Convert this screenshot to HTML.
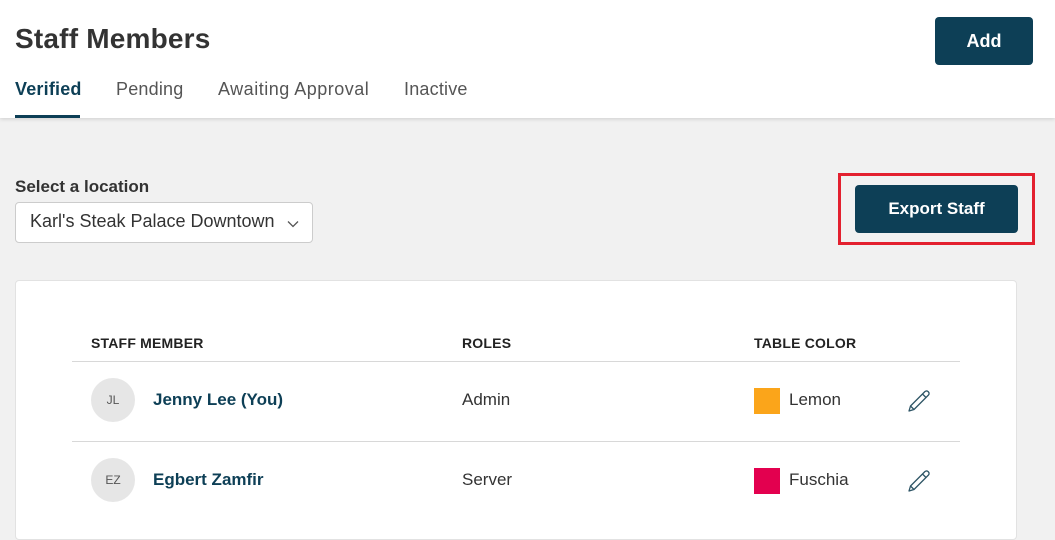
<!DOCTYPE html>
<html><head><style>
*{margin:0;padding:0;box-sizing:border-box}
body{width:1055px;height:511px;overflow:hidden;background:#f1f1f1;font-family:"Liberation Sans",sans-serif;color:#333;position:relative}
.hdr{position:absolute;left:0;top:0;width:1055px;height:118px;background:#fff;box-shadow:0 1px 4px rgba(0,0,0,.15)}
.abs{position:absolute;white-space:nowrap}
h1{position:absolute;left:15px;top:23px;font-size:28px;font-weight:bold;color:#333;letter-spacing:0.2px}
.btn{position:absolute;background:#0d3f56;color:#fff;font-weight:bold;border-radius:4px;display:flex;align-items:center;justify-content:center}
.tab{position:absolute;top:79px;font-size:18px;color:#555;letter-spacing:0.2px}
.card{position:absolute;left:15px;top:280px;width:1002px;height:260px;background:#fff;border:1px solid #e2e2e2;border-radius:4px}
.th{position:absolute;top:335px;font-size:14px;font-weight:bold;color:#222;letter-spacing:0.2px}
.line{position:absolute;left:72px;width:888px;height:1px;background:#d8d8d8}
.av{position:absolute;left:91px;width:44px;height:44px;border-radius:50%;background:#e6e6e6;font-size:12px;color:#555;display:flex;align-items:center;justify-content:center}
.nm{position:absolute;left:153px;font-size:17px;font-weight:bold;color:#0d3f56}
.tx{position:absolute;font-size:17px;color:#333}
.sw{position:absolute;left:754px;width:26px;height:26px}
</style></head><body>
<div class="hdr"></div>
<h1>Staff Members</h1>
<div class="btn" style="left:935px;top:17px;width:98px;height:48px;font-size:18px">Add</div>
<div class="tab" style="left:15px;color:#0d3f56;font-weight:bold">Verified</div>
<div class="abs" style="left:15px;top:115px;width:65px;height:3px;background:#0d3f56"></div>
<div class="tab" style="left:116px">Pending</div>
<div class="tab" style="left:218px;letter-spacing:0.5px">Awaiting Approval</div>
<div class="tab" style="left:404px">Inactive</div>
<div class="abs" style="left:15px;top:177px;font-size:17px;font-weight:bold;color:#333">Select a location</div>
<div class="abs" style="left:15px;top:202px;width:298px;height:41px;background:#fff;border:1px solid #ccc;border-radius:4px;font-size:18px;padding:8px 0 0 14px;color:#333">Karl's Steak Palace Downtown
<svg style="position:absolute;left:271px;top:17px" width="12" height="8" viewBox="0 0 12 8"><path d="M1 1.5l5 5 5-5" fill="none" stroke="#555" stroke-width="1.3"/></svg></div>
<div class="abs" style="left:838px;top:173px;width:197px;height:72px;border:3px solid #e3202f"></div>
<div class="btn" style="left:855px;top:185px;width:163px;height:48px;font-size:17px">Export Staff</div>
<div class="card"></div>
<div class="th" style="left:91px">STAFF MEMBER</div>
<div class="th" style="left:462px">ROLES</div>
<div class="th" style="left:754px">TABLE COLOR</div>
<div class="line" style="top:361px"></div>
<div class="line" style="top:441px"></div>
<div class="av" style="top:378px">JL</div>
<div class="nm" style="top:390px">Jenny Lee (You)</div>
<div class="tx" style="left:462px;top:390px">Admin</div>
<div class="sw" style="top:388px;background:#fba51a"></div>
<div class="tx" style="left:789px;top:390px">Lemon</div>
<div class="av" style="top:458px">EZ</div>
<div class="nm" style="top:470px">Egbert Zamfir</div>
<div class="tx" style="left:462px;top:470px">Server</div>
<div class="sw" style="top:468px;background:#e3004f"></div>
<div class="tx" style="left:789px;top:470px">Fuschia</div>
<svg class="abs" style="left:906px;top:388px" width="28" height="26" viewBox="0 0 28 26"><path d="M3 23l1.5-5L19 3.5a2.5 2.5 0 0 1 3.5 3.5L8 21.5z M16.5 6l3.5 3.5 M4.5 18l3.5 3.5" fill="none" stroke="#2e5566" stroke-width="1.3" stroke-linejoin="round"/></svg>
<svg class="abs" style="left:906px;top:468px" width="28" height="26" viewBox="0 0 28 26"><path d="M3 23l1.5-5L19 3.5a2.5 2.5 0 0 1 3.5 3.5L8 21.5z M16.5 6l3.5 3.5 M4.5 18l3.5 3.5" fill="none" stroke="#2e5566" stroke-width="1.3" stroke-linejoin="round"/></svg>
</body></html>
